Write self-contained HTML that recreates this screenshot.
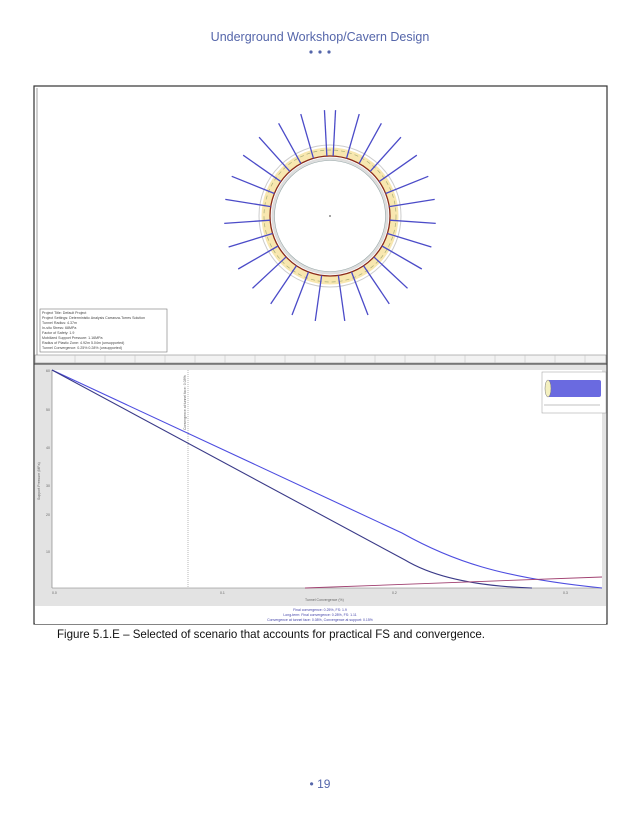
<!DOCTYPE html>
<html><head><meta charset="utf-8"><style>
html,body{margin:0;padding:0;background:#fff;width:638px;height:826px;overflow:hidden}
svg{display:block}
</style></head><body>
<svg width="638" height="826" viewBox="0 0 638 826" xmlns="http://www.w3.org/2000/svg" font-family="Liberation Sans, sans-serif">
<text x="320" y="41" text-anchor="middle" font-size="12.5" fill="#5566aa">Underground Workshop/Cavern Design</text>
<circle cx="311" cy="52" r="1.6" fill="#5566aa"/><circle cx="320" cy="52" r="1.6" fill="#5566aa"/><circle cx="329" cy="52" r="1.6" fill="#5566aa"/>

<rect x="34" y="86" width="573" height="538" fill="#fff" stroke="#333" stroke-width="1.2"/>
<line x1="37" y1="88" x2="37" y2="355" stroke="#888" stroke-width="0.8"/>
<rect x="35" y="355" width="571" height="8" fill="#f2f2f2" stroke="#777" stroke-width="0.5"/>
<g stroke="#bbb" stroke-width="0.5">
<line x1="75" y1="355" x2="75" y2="363"/><line x1="105" y1="355" x2="105" y2="363"/><line x1="135" y1="355" x2="135" y2="363"/><line x1="165" y1="355" x2="165" y2="363"/><line x1="195" y1="355" x2="195" y2="363"/><line x1="225" y1="355" x2="225" y2="363"/><line x1="255" y1="355" x2="255" y2="363"/><line x1="285" y1="355" x2="285" y2="363"/><line x1="315" y1="355" x2="315" y2="363"/><line x1="345" y1="355" x2="345" y2="363"/><line x1="375" y1="355" x2="375" y2="363"/><line x1="405" y1="355" x2="405" y2="363"/><line x1="435" y1="355" x2="435" y2="363"/><line x1="465" y1="355" x2="465" y2="363"/><line x1="495" y1="355" x2="495" y2="363"/><line x1="525" y1="355" x2="525" y2="363"/><line x1="555" y1="355" x2="555" y2="363"/><line x1="585" y1="355" x2="585" y2="363"/>
</g>

<circle cx="330" cy="216" r="71" fill="none" stroke="#ccc" stroke-width="1"/>
<circle cx="330" cy="216" r="64" fill="none" stroke="#f8e7b0" stroke-width="9"/>
<circle cx="330" cy="216" r="66" fill="none" stroke="#a9b07a" stroke-width="0.7" stroke-dasharray="4 3"/>
<circle cx="330" cy="216" r="60" fill="none" stroke="#8a2a1a" stroke-width="1.3"/>
<circle cx="330" cy="216" r="57" fill="none" stroke="#ddd" stroke-width="3"/>
<circle cx="330" cy="216" r="55.5" fill="none" stroke="#9aa" stroke-width="0.6"/>
<circle cx="330" cy="216" r="1" fill="#888"/>
<g stroke="#4b4bc8" stroke-width="1.3">
<line x1="330" y1="156" x2="330" y2="110" transform="rotate(3 330 216)"/>
<line x1="330" y1="156" x2="330" y2="110" transform="rotate(-3 330 216)"/>
<line x1="330" y1="156" x2="330" y2="110" transform="rotate(16 330 216)"/>
<line x1="330" y1="156" x2="330" y2="110" transform="rotate(-16 330 216)"/>
<line x1="330" y1="156" x2="330" y2="110" transform="rotate(29 330 216)"/>
<line x1="330" y1="156" x2="330" y2="110" transform="rotate(-29 330 216)"/>
<line x1="330" y1="156" x2="330" y2="110" transform="rotate(42 330 216)"/>
<line x1="330" y1="156" x2="330" y2="110" transform="rotate(-42 330 216)"/>
<line x1="330" y1="156" x2="330" y2="110" transform="rotate(55 330 216)"/>
<line x1="330" y1="156" x2="330" y2="110" transform="rotate(-55 330 216)"/>
<line x1="330" y1="156" x2="330" y2="110" transform="rotate(68 330 216)"/>
<line x1="330" y1="156" x2="330" y2="110" transform="rotate(-68 330 216)"/>
<line x1="330" y1="156" x2="330" y2="110" transform="rotate(81 330 216)"/>
<line x1="330" y1="156" x2="330" y2="110" transform="rotate(-81 330 216)"/>
<line x1="330" y1="156" x2="330" y2="110" transform="rotate(94 330 216)"/>
<line x1="330" y1="156" x2="330" y2="110" transform="rotate(-94 330 216)"/>
<line x1="330" y1="156" x2="330" y2="110" transform="rotate(107 330 216)"/>
<line x1="330" y1="156" x2="330" y2="110" transform="rotate(-107 330 216)"/>
<line x1="330" y1="156" x2="330" y2="110" transform="rotate(120 330 216)"/>
<line x1="330" y1="156" x2="330" y2="110" transform="rotate(-120 330 216)"/>
<line x1="330" y1="156" x2="330" y2="110" transform="rotate(133 330 216)"/>
<line x1="330" y1="156" x2="330" y2="110" transform="rotate(-133 330 216)"/>
<line x1="330" y1="156" x2="330" y2="110" transform="rotate(146 330 216)"/>
<line x1="330" y1="156" x2="330" y2="110" transform="rotate(-146 330 216)"/>
<line x1="330" y1="156" x2="330" y2="110" transform="rotate(159 330 216)"/>
<line x1="330" y1="156" x2="330" y2="110" transform="rotate(-159 330 216)"/>
<line x1="330" y1="156" x2="330" y2="110" transform="rotate(172 330 216)"/>
<line x1="330" y1="156" x2="330" y2="110" transform="rotate(-172 330 216)"/>
</g>

<rect x="40" y="309" width="127" height="43" fill="#fff" stroke="#777" stroke-width="0.6"/>
<g font-size="3.6" fill="#444">
<text x="42" y="314">Project Title:   Default Project</text>
<text x="42" y="319">Project Settings:   Deterministic Analysis    Carranza-Torres Solution</text>
<text x="42" y="324">Tunnel Radius:   4.37m</text>
<text x="42" y="329">In-situ Stress:   68MPa</text>
<text x="42" y="334">Factor of Safety:   1.9</text>
<text x="42" y="339">Mobilized Support Pressure:   1.16MPa</text>
<text x="42" y="344">Radius of Plastic Zone:   4.92m   5.04m (unsupported)</text>
<text x="42" y="349">Tunnel Convergence:   0.25%   0.28% (unsupported)</text>
</g>

<rect x="35" y="364" width="571" height="242" fill="#e3e3e3"/>
<line x1="34" y1="364" x2="607" y2="364" stroke="#333" stroke-width="1"/>
<rect x="52" y="370" width="550" height="218" fill="#fff"/>
<line x1="52" y1="370" x2="52" y2="588" stroke="#777" stroke-width="0.6"/>
<line x1="52" y1="588" x2="602" y2="588" stroke="#777" stroke-width="0.6"/>
<line x1="188" y1="370" x2="188" y2="588" stroke="#888" stroke-width="0.6" stroke-dasharray="1 1"/>
<text transform="translate(186 430) rotate(-90)" font-size="3.5" fill="#666">Convergence at tunnel face: 0.08%</text>
<text transform="translate(40 500) rotate(-90)" font-size="3.5" fill="#666">Support Pressure (MPa)</text>
<g font-size="3.5" fill="#666">
<text x="46" y="372">60</text><text x="46" y="411">50</text><text x="46" y="449">40</text><text x="46" y="487">30</text><text x="46" y="516">20</text><text x="46" y="553">10</text>
<text x="52" y="594">0.0</text><text x="220" y="594">0.1</text><text x="392" y="594">0.2</text><text x="563" y="594">0.3</text>
<text x="305" y="601">Tunnel Convergence (%)</text>
</g>
<path d="M52 370 L402 533 C450 560 500 578 602 588" fill="none" stroke="#4d4de0" stroke-width="1.1"/>
<path d="M52 370 L405 560 C430 575 470 586 532 588" fill="none" stroke="#3a3a88" stroke-width="1.1"/>
<line x1="305" y1="588" x2="602" y2="577" stroke="#a04070" stroke-width="0.9"/>
<rect x="542" y="372" width="64" height="41" fill="#fff" stroke="#999" stroke-width="0.5"/>
<rect x="547" y="380" width="54" height="17" fill="#6a6ae0" rx="2"/>
<ellipse cx="548" cy="388.5" rx="3" ry="8.5" fill="#f4f0c0" stroke="#777" stroke-width="0.5"/>
<line x1="544" y1="405" x2="600" y2="405" stroke="#666" stroke-width="0.4"/>
<rect x="35" y="606" width="571" height="18" fill="#fff"/>
<g font-size="3.5" fill="#4444aa" text-anchor="middle">
<text x="320" y="611">Final convergence: 0.25%, FS: 1.9</text>
<text x="320" y="616">Long-term: Final convergence: 0.28%, FS: 1.11</text>
<text x="320" y="621">Convergence at tunnel face: 0.08%, Convergence at support: 0.15%</text>
</g>

<text x="57" y="638" font-size="11.8" fill="#111" textLength="428" lengthAdjust="spacingAndGlyphs">Figure 5.1.E – Selected of scenario that accounts for practical FS and convergence.</text>
<text x="320" y="788" text-anchor="middle" font-size="12" fill="#5566aa">• 19</text>
</svg>
</body></html>
